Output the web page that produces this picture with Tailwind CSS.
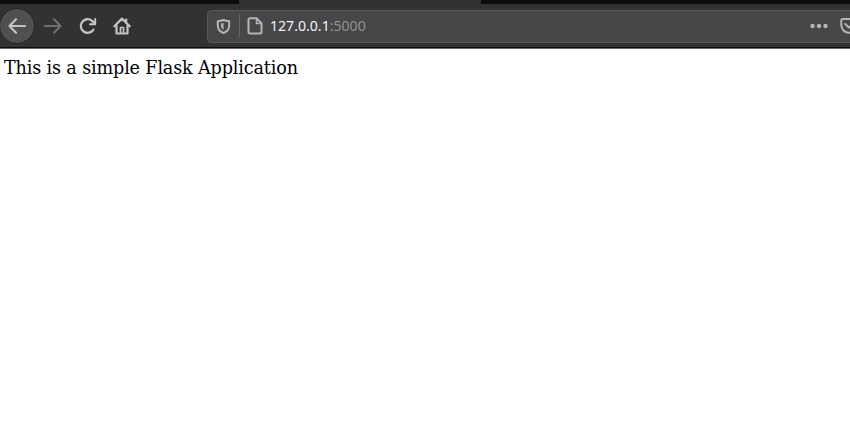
<!DOCTYPE html>
<html lang="en">
  <head>
    <meta charset="UTF-8" />
    <meta name="viewport" content="width=device-width, initial-scale=1.0" />
    <title>127.0.0.1:5000</title>
    <script src="https://cdn.jsdelivr.net/npm/@tailwindcss/browser@4"></script>
  </head>

  <body class="h-screen overflow-hidden bg-white text-black">
    <!-- Tab strip -->
    <div class="h-1 bg-[#0c0c0d] pl-[239px]">
      <div class="h-full w-[242px] bg-[#323234]"></div>
    </div>

    <!-- Toolbar -->
    <header
      class="flex h-[45px] items-center overflow-hidden border-b border-[#6a6a6c] bg-[#323234] shadow-[inset_0_-1px_0_#0c0c0d]"
    >
      <nav class="flex w-[207px] shrink-0 items-center text-[#c4c4c5]">
        <button
          class="flex size-[34px] items-center justify-center rounded-full bg-[#505052] outline outline-[#29292b]"
        >
          <svg class="size-5" viewBox="0 0 20 20" fill="none" stroke="currentColor" stroke-width="2.2" stroke-linecap="round" stroke-linejoin="round">
            <path d="M18 10H2.5M9 3.3 2.5 10 9 16.7" />
          </svg>
        </button>
        <button class="ml-[9px] text-[#6f6f71]">
          <svg class="size-5" viewBox="0 0 20 20" fill="none" stroke="currentColor" stroke-width="2.2" stroke-linecap="round" stroke-linejoin="round">
            <path d="M2 10h15.5M11 3.3l6.5 6.7-6.5 6.7" />
          </svg>
        </button>
        <button class="ml-[15px]">
          <svg class="size-5" viewBox="0 0 20 20" fill="none" stroke="currentColor" stroke-width="2.3" stroke-linecap="round" stroke-linejoin="round">
            <path d="M15.3 13.8A6.8 6.8 0 1 1 14 4.8l2.2 2.4" />
            <path d="M17.2 3v5.2H12" stroke-width="2" />
          </svg>
        </button>
        <button class="ml-[14px]">
          <svg class="size-5" viewBox="0 0 20 20" fill="none" stroke="currentColor" stroke-width="2.2" stroke-linecap="round" stroke-linejoin="round">
            <path d="M2.3 10.3 10 2.6l7.7 7.7M4.5 9.5v8h11v-8" />
            <path d="M14.2 3.5v2" />
            <path d="M8.5 16.5v-5h3v5" stroke-width="1.7" />
          </svg>
        </button>
      </nav>

      <!-- Address bar -->
      <div
        class="flex h-[33px] w-[720px] shrink-0 items-center rounded border border-[#58585a] bg-[#474749] text-[#b5b5b6]"
      >
        <svg class="ml-[7px] size-[17px]" viewBox="0 0 17 17" fill="none" stroke="currentColor" stroke-width="2" stroke-linejoin="round">
          <path d="M8.5 2c1.9.8 3.7 1.1 5.7 1.2v4.2c0 3.600-2.300 6.300-5.700 7.600-3.400-1.300-5.700-4-5.700-7.600V3.200c2-.1 3.800-.4 5.700-1.200z" />
          <path d="M8.5 5v6.8C6.8 10.7 6 9.2 6 7.4V5.5C6.9 5.4 7.7 5.3 8.5 5z" fill="currentColor" stroke="none" />
        </svg>
        <div class="ml-[7px] h-6 w-px bg-[#626267]"></div>
        <svg class="ml-[7px] h-[18px] w-4" viewBox="0 0 16 18" fill="none" stroke="currentColor" stroke-width="2" stroke-linejoin="round">
          <path d="M3 1.3h6.5l5 5V15a1.5 1.5 0 0 1-1.5 1.5H3A1.5 1.5 0 0 1 1.5 15V2.8A1.5 1.5 0 0 1 3 1.3z" />
          <path d="M9.5 2v4.5H14" stroke-width="1.5" />
        </svg>
        <div
          class="ml-[7px] w-[539px] font-['Noto_Sans',sans-serif] text-[14.1px] leading-none text-[#919193]"
        >
          <span class="text-[#f3f3f4]">127.0.0.1</span>:5000
        </div>
        <svg class="h-5 w-5" viewBox="0 0 20 20" fill="currentColor">
          <circle cx="3.5" cy="10" r="2.2" />
          <circle cx="10" cy="10" r="2.2" />
          <circle cx="16.5" cy="10" r="2.2" />
        </svg>
        <svg class="ml-[11px] size-[18px]" viewBox="0 0 18 18" fill="none" stroke="currentColor" stroke-width="2" stroke-linecap="round" stroke-linejoin="round">
          <path d="M2.5 2h13a1.2 1.2 0 0 1 1.2 1.2V8a7.7 7.7 0 0 1-15.4 0V3.2A1.2 1.2 0 0 1 2.500 2z" />
          <path d="m5.3 7 3.7 3.6L12.7 7" />
        </svg>
      </div>
    </header>

    <!-- Page content -->
    <main
      class="px-1 pt-[9px] font-['DejaVu_Serif',serif] text-[17.6px] leading-5 tracking-[-0.15px]"
    >
      This is a simple Flask Application
    </main>
  </body>
</html>
